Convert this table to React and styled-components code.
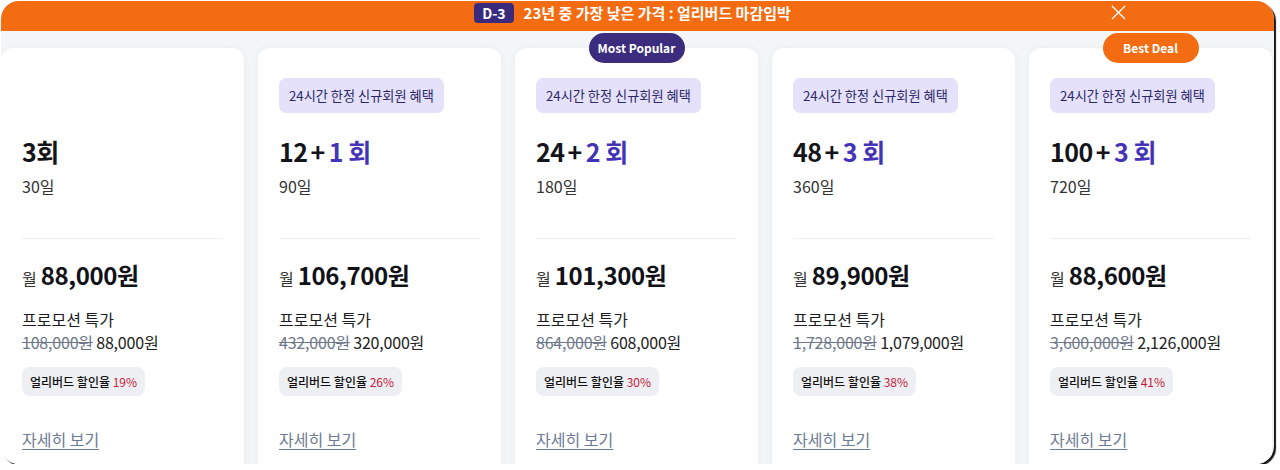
import styled, { createGlobalStyle } from "styled-components";

const GlobalStyle = createGlobalStyle`
  * { box-sizing: border-box; }
  body {
    margin: 0;
    background: #ffffff;
    font-family: "Noto Sans CJK KR", "Noto Sans", sans-serif;
  }
`;

const Frame = styled.div`
  background: #f4f5f7;
  border-radius: 18px;
  box-shadow: 2px 2px 1px #151515;
  height: 463px;
  margin: 1px 0 0 1px;
  overflow: hidden;
  width: 1273px;
`;

const Banner = styled.div`
  align-items: center;
  background: #f36c12;
  display: flex;
  gap: 10px;
  height: 30px;
  justify-content: center;
  padding: 0 10px 7px 0;
  position: relative;
`;

const DayBadge = styled.span`
  background: #3a2a7d;
  border-radius: 4px;
  color: #fff;
  font-size: 14px;
  font-weight: 700;
  line-height: 20px;
  padding: 0 8px;
`;

const BannerText = styled.span`
  color: #fff;
  font-size: 15px;
  font-weight: 700;
`;

const Close = styled.button`
  background: none;
  border: 0;
  display: flex;
  padding: 0;
  position: absolute;
  right: 148px;
  top: 4px;
`;

const Cards = styled.div`
  display: grid;
  gap: 14px;
  grid-template-columns: repeat(5, 243px);
  padding: 17px 0 0 0;
`;

const Card = styled.div`
  background: #fff;
  border-radius: 12px;
  box-shadow: 0 0 8px rgba(0, 0, 0, 0.04);
  height: 430px;
  padding: 30px 21px 0;
  position: relative;
`;

const Pill = styled.div`
  background: ${(p) => p.$bg};
  border-radius: 16px;
  color: #fff;
  font-size: 12px;
  font-weight: 700;
  left: 50%;
  line-height: 30px;
  position: absolute;
  text-align: center;
  top: -15px;
  transform: translateX(-50%);
  width: 96px;
`;

const Tag = styled.div`
  background: #e5e1fb;
  border-radius: 7px;
  color: #2c2868;
  display: inline-block;
  font-size: 13.2px;
  height: 35px;
  line-height: 35px;
  padding: 0 10px;
  visibility: ${(p) => (p.$hidden ? "hidden" : "visible")};
`;

const Count = styled.div`
  color: #14141a;
  font-size: 25px;
  font-weight: 700;
  letter-spacing: -0.5px;
  line-height: 32px;
  margin-top: 22px;
`;

const Plus = styled.span`
  margin: 0 4px 0 3px;
`;

const Bonus = styled.span`
  color: #4433b6;
`;

const Days = styled.div`
  color: #333;
  font-size: 16px;
  line-height: 24px;
  margin-top: 7px;
`;

const Divider = styled.hr`
  border: 0;
  border-top: 1px solid #eeeff1;
  margin: 40px 0 0;
`;

const Price = styled.div`
  align-items: baseline;
  color: #111118;
  display: flex;
  gap: 4px;
  line-height: 32px;
  margin-top: 20px;
`;

const Month = styled.span`
  color: #333;
  font-size: 16px;
`;

const Amount = styled.span`
  font-size: 24px;
  font-weight: 700;
  letter-spacing: -0.4px;
`;

const PromoTitle = styled.div`
  color: #1c1c22;
  font-size: 16px;
  font-weight: 400;
  line-height: 23px;
  margin-top: 14px;
`;

const PromoPrice = styled.div`
  color: #222;
  font-size: 16px;
  letter-spacing: -0.2px;
  line-height: 23px;
`;

const Old = styled.s`
  color: #6e7889;
`;

const Rate = styled.div`
  background: #eeeff2;
  border-radius: 8px;
  color: #111;
  display: inline-block;
  font-size: 12px;
  font-weight: 500;
  line-height: 29px;
  margin-top: 13px;
  padding: 0 8px;
`;

const Percent = styled.span`
  color: #c41a3c;
  font-weight: 400;
`;

const More = styled.a`
  color: #6d7a94;
  display: block;
  font-size: 16px;
  line-height: 24px;
  margin-top: 31px;
  text-decoration: underline;
  text-underline-offset: 3px;
`;

const plans = [
  { base: "3회", days: "30일", price: "88,000원", old: "108,000원", now: "88,000원", rate: "19%" },
  { base: "12", bonus: "1 회", days: "90일", price: "106,700원", old: "432,000원", now: "320,000원", rate: "26%" },
  { base: "24", bonus: "2 회", days: "180일", price: "101,300원", old: "864,000원", now: "608,000원", rate: "30%", pill: "Most Popular", pillBg: "#3b2c7e" },
  { base: "48", bonus: "3 회", days: "360일", price: "89,900원", old: "1,728,000원", now: "1,079,000원", rate: "38%" },
  { base: "100", bonus: "3 회", days: "720일", price: "88,600원", old: "3,600,000원", now: "2,126,000원", rate: "41%", pill: "Best Deal", pillBg: "#f36c12" }
];

export default function App() {
  return (
    <>
      <GlobalStyle />
      <Frame>
        <Banner>
          <DayBadge>D-3</DayBadge>
          <BannerText>23년 중 가장 낮은 가격 : 얼리버드 마감임박</BannerText>
          <Close aria-label="close">
            <svg width="15" height="15" viewBox="0 0 15 15" stroke="#fff" strokeWidth="1.4">
              <path d="M1 1L14 14M14 1L1 14" />
            </svg>
          </Close>
        </Banner>
        <Cards>
          {plans.map((p) => (
            <Card key={p.days}>
              {p.pill && <Pill $bg={p.pillBg}>{p.pill}</Pill>}
              <Tag $hidden={!p.bonus}>24시간 한정 신규회원 혜택</Tag>
              <Count>
                {p.base}
                {p.bonus && (
                  <>
                    <Plus>+</Plus>
                    <Bonus>{p.bonus}</Bonus>
                  </>
                )}
              </Count>
              <Days>{p.days}</Days>
              <Divider />
              <Price>
                <Month>월</Month>
                <Amount>{p.price}</Amount>
              </Price>
              <PromoTitle>프로모션 특가</PromoTitle>
              <PromoPrice>
                <Old>{p.old}</Old> {p.now}
              </PromoPrice>
              <Rate>
                얼리버드 할인율 <Percent>{p.rate}</Percent>
              </Rate>
              <More href="#">자세히 보기</More>
            </Card>
          ))}
        </Cards>
      </Frame>
    </>
  );
}
